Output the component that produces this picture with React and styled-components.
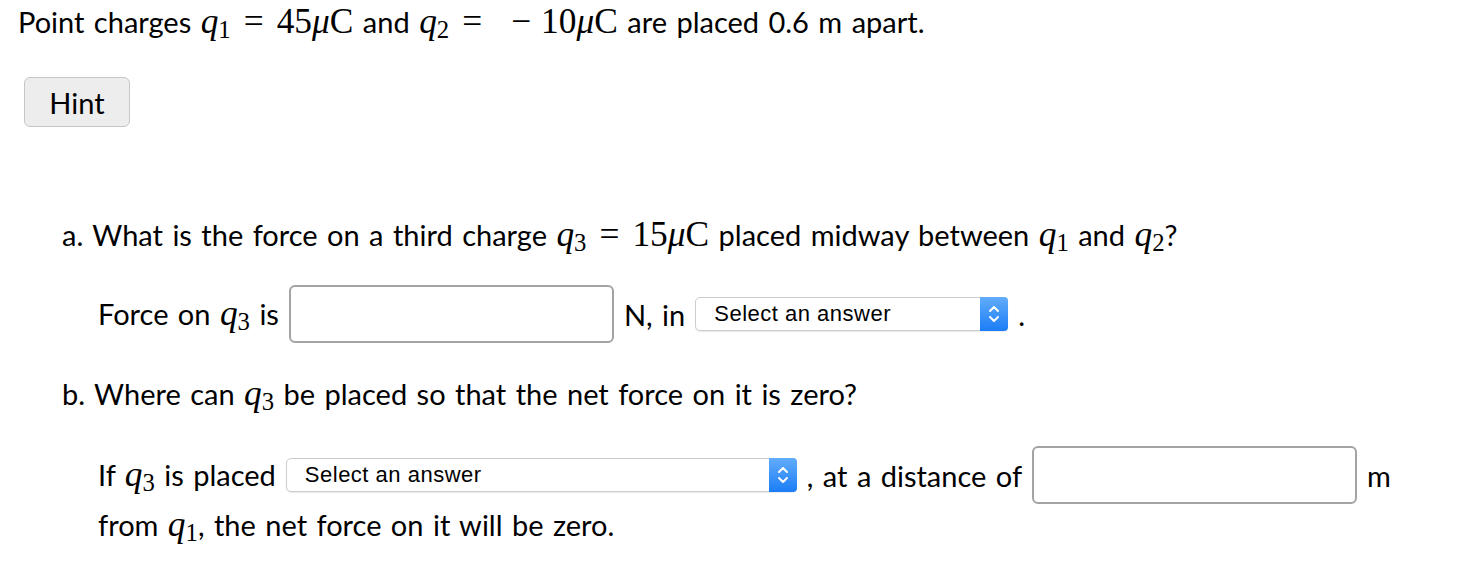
import React from 'react';
import styled, { createGlobalStyle } from 'styled-components';

const GlobalStyle = createGlobalStyle`
  body {
    margin: 0;
    background: #fff;
    color: #000;
    font-family: Lato, "Open Sans", sans-serif;
  }
`;

const Page = styled.div`
  padding: 3px 0 0 18px;
  font-size: 29px;
  word-spacing: 2px;
`;

const Intro = styled.p`
  margin: 0;
  line-height: 38px;
`;

const HintButton = styled.button`
  display: block;
  margin: 36px 0 0 6px;
  width: 106px;
  height: 50px;
  border: 1px solid #c6c6c6;
  border-radius: 6px;
  background: #ededed;
  font-family: inherit;
  font-size: 29px;
  color: #000;
  padding: 0;
`;

const Parts = styled.div`
  margin-top: 89px;
  padding-left: 44px;
`;

const Prompt = styled.p`
  margin: ${(p) => p.$top || 0}px 0 0;
  line-height: 38px;
`;

const AnswerLine = styled.div`
  display: flex;
  align-items: center;
  gap: 10px;
  padding-left: 36px;
  margin-top: ${(p) => p.$top || 0}px;
  height: 58px;
`;

const Tail = styled.div`
  padding-left: 36px;
  margin-top: 2px;
  line-height: 38px;
`;

const Math = styled.span`
  font-family: "Liberation Serif", "DejaVu Serif", serif;
  font-size: 1.22em;
  line-height: 1;
  word-spacing: 0;
  white-space: nowrap;
`;

const Var = styled.i`
  font-style: italic;
`;

const Sub = styled.sub`
  font-style: normal;
  font-size: 0.7em;
  line-height: 0;
  vertical-align: -0.22em;
`;

const Op = styled.span`
  margin: 0 ${(p) => p.$right ?? 13}px 0 ${(p) => p.$left ?? 13}px;
`;

const TextBox = styled.input`
  box-sizing: border-box;
  width: 325px;
  height: 58px;
  border: 2px solid #a3a3a3;
  border-radius: 6px;
  background: #fff;
`;

const SelectBox = styled.div`
  box-sizing: border-box;
  display: inline-flex;
  align-items: stretch;
  width: ${(p) => p.$width}px;
  height: 34px;
  border: 1px solid #cdcdcd;
  border-radius: 5px;
  background: #fff;
  box-shadow: 0 1px 1px rgba(0, 0, 0, 0.08);
  font-family: "Liberation Sans", Arial, sans-serif;
  font-size: 22px;
  letter-spacing: 0.5px;
  word-spacing: 0;
`;

const SelectLabel = styled.span`
  flex: 1;
  display: flex;
  align-items: center;
  padding-left: 18px;
`;

const SelectArrow = styled.span`
  width: 28px;
  display: flex;
  align-items: center;
  justify-content: center;
  background: linear-gradient(#62acfb, #1b7df6);
  border-radius: 0 4px 4px 0;
  margin: -1px -1px -1px 0;
`;

const Chevrons = () => (
  <svg width="12" height="20" viewBox="0 0 12 20" fill="none" stroke="#fff" strokeWidth="2" strokeLinecap="round" strokeLinejoin="round">
    <path d="M2 7 L6 3 L10 7" />
    <path d="M2 13 L6 17 L10 13" />
  </svg>
);

const Select = ({ width }) => (
  <SelectBox $width={width}>
    <SelectLabel>Select an answer</SelectLabel>
    <SelectArrow>
      <Chevrons />
    </SelectArrow>
  </SelectBox>
);

const Q = ({ n }) => (
  <Math>
    <Var>q</Var>
    <Sub>{n}</Sub>
  </Math>
);

const App = () => (
  <>
    <GlobalStyle />
    <Page>
      <Intro>
        Point charges <Math><Var>q</Var><Sub>1</Sub><Op>=</Op>45<Var>μ</Var>C</Math> and{' '}
        <Math><Var>q</Var><Sub>2</Sub><Op>=</Op><Op $left={16} $right={10}>−</Op>10<Var>μ</Var>C</Math> are placed 0.6 m apart.
      </Intro>
      <HintButton>Hint</HintButton>
      <Parts>
        <Prompt>
          a. What is the force on a third charge <Math><Var>q</Var><Sub>3</Sub><Op>=</Op>15<Var>μ</Var>C</Math> placed midway between <Q n="1" /> and <Q n="2" />?
        </Prompt>
        <AnswerLine $top={31}>
          <span>Force on <Q n="3" /> is</span>
          <TextBox type="text" />
          <span>N, in</span>
          <Select width={313} />
          <span>.</span>
        </AnswerLine>
        <Prompt $top={32}>
          b. Where can <Q n="3" /> be placed so that the net force on it is zero?
        </Prompt>
        <AnswerLine $top={33}>
          <span>If <Q n="3" /> is placed</span>
          <Select width={511} />
          <span>, at a distance of</span>
          <TextBox type="text" />
          <span>m</span>
        </AnswerLine>
        <Tail>
          from <Q n="1" />, the net force on it will be zero.
        </Tail>
      </Parts>
    </Page>
  </>
);

export default App;
